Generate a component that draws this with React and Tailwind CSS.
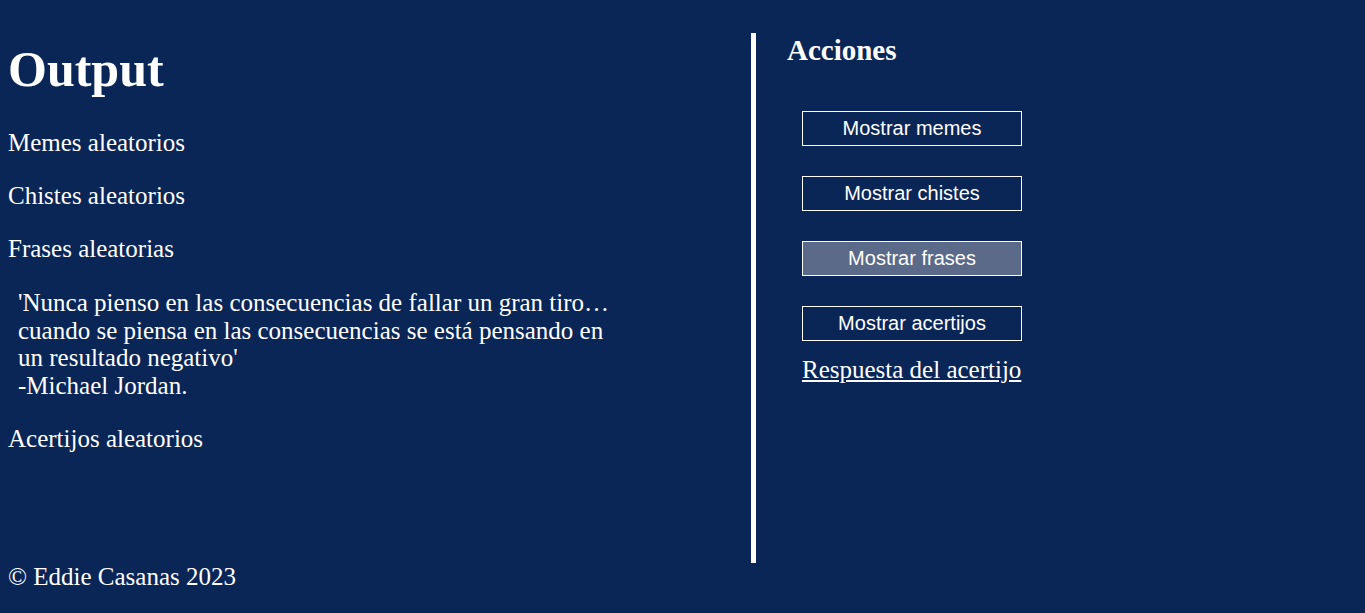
const acciones = [
  { id: 'memes', texto: 'Mostrar memes' },
  { id: 'chistes', texto: 'Mostrar chistes' },
  { id: 'frases', texto: 'Mostrar frases' },
  { id: 'acertijos', texto: 'Mostrar acertijos' },
]

export default function App() {
  const activo = 'frases'

  return (
    <div className="min-h-screen bg-[#0a2656] text-white font-['Liberation_Serif',serif]">
      <div className="flex">
        <section className="w-[751px] pl-2 pt-[40px]">
          <h1 className="text-[50px] font-bold leading-[58px] mb-[31px]">Output</h1>
          <p className="text-[25px] leading-[28px] mb-[25px]">Memes aleatorios</p>
          <p className="text-[25px] leading-[28px] mb-[25px]">Chistes aleatorios</p>
          <p className="text-[25px] leading-[28px]">Frases aleatorias</p>
          <div className="mt-[26px] pl-[10px] text-[25px] leading-[27.5px]">
            'Nunca pienso en las consecuencias de fallar un gran tiro…<br />
            cuando se piensa en las consecuencias se está pensando en<br />
            un resultado negativo'<br />
            -Michael Jordan.
          </div>
          <p className="mt-[26px] text-[25px] leading-[28px]">Acertijos aleatorios</p>
        </section>

        <aside className="mt-[33px] h-[530px] border-l-[5px] border-white pl-[31px]">
          <h3 className="text-[29px] font-bold leading-[34px]">Acciones</h3>
          <div className="mt-[44px] ml-[15px] flex flex-col gap-[30px]">
            {acciones.map(a => (
              <button
                key={a.id}
                className={`w-[220px] h-[35px] border border-white text-[20px] leading-[23px] font-['Liberation_Sans',Arial,sans-serif] text-white ${a.id === activo ? 'bg-[#5b6a88]' : 'bg-transparent'}`}
              >
                {a.texto}
              </button>
            ))}
          </div>
          <a href="#" className="block mt-[15px] ml-[15px] text-[25px] leading-[28px] underline">Respuesta del acertijo</a>
        </aside>
      </div>

      <footer className="pl-2 text-[25px] leading-[28px] pb-[22px]">© Eddie Casanas 2023</footer>
    </div>
  )
}
